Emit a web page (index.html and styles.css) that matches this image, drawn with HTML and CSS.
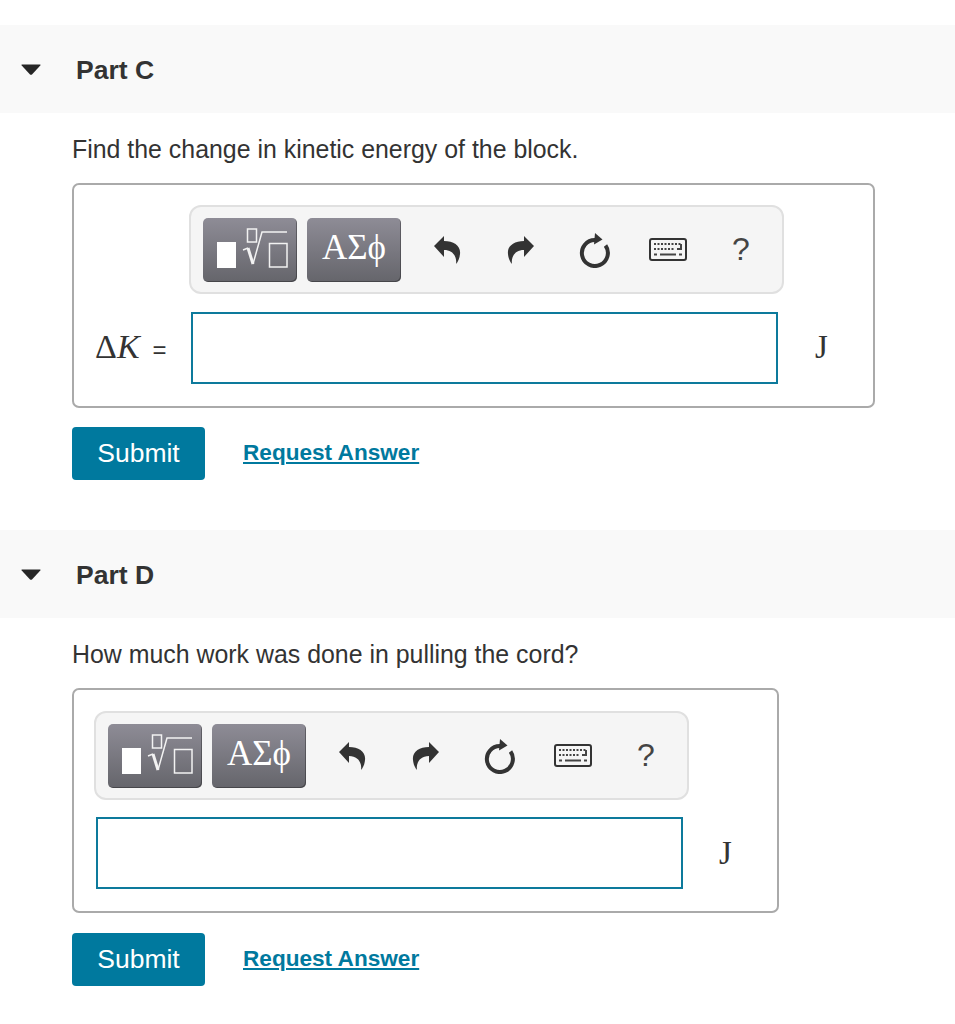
FILE: index.html
```html
<!DOCTYPE html>
<html>
<head>
    <title>Part C and D</title>
    <link rel="stylesheet" href="styles.css">
</head>
<body>
    <svg class="icon-defs">
        <symbol id="i-caret" viewBox="0 0 20 11"><path d="M1 0.5H19Q20 0.5 19.3 1.4L11 10.4Q10 11.2 9 10.4L0.7 1.4Q0 0.5 1 0.5Z"/></symbol>
        <symbol id="i-templates" viewBox="0 0 94 64">
            <rect class="fill" x="14" y="24" width="19" height="26"/>
            <rect class="line" x="44.5" y="11" width="9" height="13"/>
            <polyline class="line" points="40,32 45,30"/>
            <polyline class="thick" points="45,30 50,46"/>
            <polyline class="line" points="50,46 59,14 84,14"/>
            <rect class="line" x="66.5" y="25.5" width="17.500" height="23.500"/>
        </symbol>
        <symbol id="i-undo" viewBox="0 0 30 32"><path d="M2 12L12 2V7C22 7 29 12 28 20C27.700 24 26 28 24 30C25 24 22 16 12 16V23Z"/></symbol>
        <symbol id="i-redo" viewBox="0 0 30 32"><path d="M28 12L18 2V7C8 7 1 12 2 20C2.300 24 4 28 6 30C5 24 8 16 18 16V23Z"/></symbol>
        <symbol id="i-reset" viewBox="0 0 34 36">
            <path class="ring" d="M17 8A13 13 0 1 0 27.500 13.500"/>
            <path d="M17 1L24.500 7.500L16 12.500Z"/>
        </symbol>
        <symbol id="i-keys" viewBox="0 0 38 23">
            <rect class="key-frame" x="1" y="1" width="36" height="21" rx="2"/>
            <path class="key-dots" d="M5 6H33M5 11H26"/>
            <path class="key-bars" d="M5 16.500H8M11 16.500H27M30 16.500H33M28 11H33M32 6V11"/>
        </symbol>
    </svg>

    <section class="part">
        <h3 class="part-head">
            <svg class="caret"><use href="#i-caret"/></svg>
            <span class="part-title">Part C</span>
        </h3>
        <div class="part-body">
            <p class="prompt">Find the change in kinetic energy of the block.</p>
            <div class="answer-box">
                <div class="math-label"><span class="greek">Δ</span><i>K</i><span class="eq">=</span></div>
                <div class="answer-main">
                    <div class="toolbar">
                        <button class="tool-btn"><svg class="tpl"><use href="#i-templates"/></svg></button>
                        <button class="tool-btn symbols">ΑΣϕ</button>
                        <div class="tool-icons">
                            <span class="tool"><svg class="arrow"><use href="#i-undo"/></svg></span>
                            <span class="tool"><svg class="arrow"><use href="#i-redo"/></svg></span>
                            <span class="tool"><svg class="reset"><use href="#i-reset"/></svg></span>
                            <span class="tool"><svg class="keys"><use href="#i-keys"/></svg></span>
                            <span class="tool help">?</span>
                        </div>
                    </div>
                    <input class="answer-input" type="text">
                </div>
                <div class="unit">J</div>
            </div>
            <div class="actions">
                <button class="submit">Submit</button>
                <a class="request" href="#">Request Answer</a>
            </div>
        </div>
    </section>

    <section class="part">
        <h3 class="part-head">
            <svg class="caret"><use href="#i-caret"/></svg>
            <span class="part-title">Part D</span>
        </h3>
        <div class="part-body">
            <p class="prompt">How much work was done in pulling the cord?</p>
            <div class="answer-box no-label">
                <div class="answer-main">
                    <div class="toolbar">
                        <button class="tool-btn"><svg class="tpl"><use href="#i-templates"/></svg></button>
                        <button class="tool-btn symbols">ΑΣϕ</button>
                        <div class="tool-icons">
                            <span class="tool"><svg class="arrow"><use href="#i-undo"/></svg></span>
                            <span class="tool"><svg class="arrow"><use href="#i-redo"/></svg></span>
                            <span class="tool"><svg class="reset"><use href="#i-reset"/></svg></span>
                            <span class="tool"><svg class="keys"><use href="#i-keys"/></svg></span>
                            <span class="tool help">?</span>
                        </div>
                    </div>
                    <input class="answer-input" type="text">
                </div>
                <div class="unit">J</div>
            </div>
            <div class="actions">
                <button class="submit">Submit</button>
                <a class="request" href="#">Request Answer</a>
            </div>
        </div>
    </section>
</body>
</html>
```

FILE: styles.css
```css
body {
    margin: 0;
    padding-top: 25px;
    background-color: #fff;
    color: #333;
    font-family: "Liberation Sans", Arial, sans-serif;
}

.icon-defs {
    display: none;
}

.part {
    margin-bottom: 50px;
}

.part-head {
    display: flex;
    align-items: center;
    height: 88px;
    margin: 0;
    padding-left: 21px;
    background-color: #f9f9f9;
    font-size: 26.5px;
    font-weight: bold;
}

.caret {
    width: 20px;
    height: 11px;
    margin-right: 35px;
    fill: #262626;
}

.part-title {
    padding-top: 3px;
}

.part-body {
    padding-left: 72px;
}

.prompt {
    margin: 0;
    padding-top: 21px;
    height: 49px;
    line-height: 30px;
    font-size: 24.9px;
}

.answer-box {
    display: flex;
    align-items: flex-start;
    box-sizing: border-box;
    width: 803px;
    height: 225px;
    padding-top: 20px;
    background-color: #fff;
    border: 2px solid #aaa;
    border-radius: 7px;
}

.answer-box.no-label {
    width: 707px;
    padding: 21px 0 0 20px;
}

.no-label .answer-input {
    margin-top: 17px;
}

.no-label + .actions {
    margin-top: 20px;
}

.math-label {
    display: flex;
    align-items: baseline;
    box-sizing: border-box;
    width: 115px;
    height: 72px;
    margin-top: 107px;
    padding: 17px 0 0 21px;
    font-family: "Liberation Serif", serif;
    font-size: 34px;
    line-height: 36px;
}

.math-label .eq {
    margin-left: 13px;
    font-family: "Liberation Sans", sans-serif;
    font-size: 24px;
}

.answer-main {
    width: 595px;
    flex: none;
}

.toolbar {
    display: flex;
    align-items: center;
    box-sizing: border-box;
    height: 89px;
    padding-left: 12px;
    background-color: #f5f5f5;
    border: 2px solid #e0e0e0;
    border-radius: 12px;
}

.tool-btn {
    flex: none;
    width: 94px;
    height: 64px;
    margin-right: 10px;
    padding: 0;
    background: linear-gradient(#8e8c96, #65656b);
    border: none;
    border-radius: 5px;
    box-shadow: inset -1px -1px 0 rgba(0, 0, 0, 0.3);
    color: #fff;
}

.tool-btn.symbols {
    padding-bottom: 3px;
    font-family: "Liberation Serif", serif;
    font-size: 35px;
}

.tpl {
    display: block;
    width: 94px;
    height: 64px;
}

#i-templates .fill {
    fill: #fff;
}

#i-templates .line {
    fill: none;
    stroke: #f2f2f2;
    stroke-width: 1.5;
}

#i-templates .thick {
    fill: none;
    stroke: #f2f2f2;
    stroke-width: 3;
}

.tool-icons {
    display: flex;
    align-items: center;
    margin-left: -1px;
}

.tool {
    display: flex;
    flex: none;
    justify-content: center;
    align-items: center;
    box-sizing: border-box;
    width: 74px;
    fill: #333;
}

.arrow {
    width: 30px;
    height: 32px;
}

.reset {
    width: 34px;
    height: 36px;
}

#i-reset .ring {
    fill: none;
    stroke: #333;
    stroke-width: 4;
}

.keys {
    width: 38px;
    height: 23px;
    margin-right: 3px;
}

#i-keys .key-frame {
    fill: #f5f5f5;
    stroke: #333;
    stroke-width: 2;
}

#i-keys .key-dots {
    fill: none;
    stroke: #444;
    stroke-width: 2;
    stroke-dasharray: 2 1.5;
}

#i-keys .key-bars {
    fill: none;
    stroke: #444;
    stroke-width: 2;
}

.help {
    padding-right: 4px;
    font-size: 32px;
    color: #444;
}

.answer-input {
    display: block;
    box-sizing: border-box;
    width: 587px;
    height: 72px;
    margin: 18px 0 0 2px;
    background-color: #fff;
    border: 2px solid #0d7a9c;
    border-radius: 0;
}

.unit {
    width: 58px;
    margin: 124px 0 0 auto;
    font-family: "Liberation Serif", serif;
    font-size: 33px;
    line-height: 36px;
}

.actions {
    display: flex;
    align-items: center;
    margin-top: 19px;
}

.submit {
    width: 133px;
    height: 53px;
    padding: 0;
    background-color: #00799e;
    border: none;
    border-radius: 4px;
    color: #fff;
    font-family: "Liberation Sans", sans-serif;
    font-size: 26.5px;
}

.request {
    margin: 0 0 2px 38px;
    color: #00799e;
    font-size: 22.6px;
    font-weight: bold;
}
```
